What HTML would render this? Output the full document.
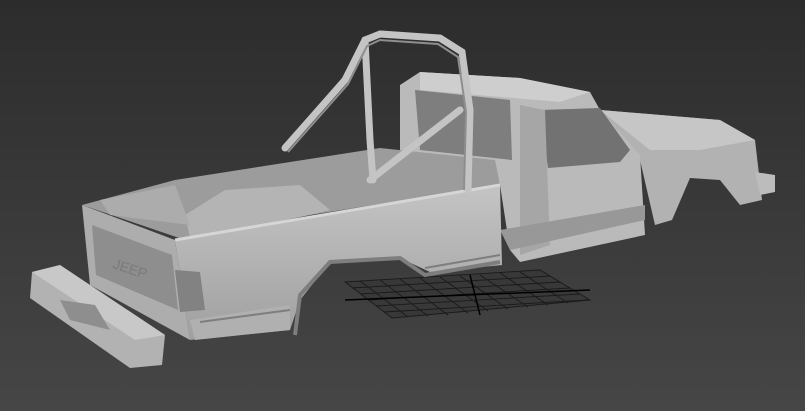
<!DOCTYPE html>
<html><head><style>
html,body{margin:0;padding:0;width:805px;height:411px;overflow:hidden;background:#3a3a3a}
</style></head><body>
<svg width="805" height="411" viewBox="0 0 805 411" xmlns="http://www.w3.org/2000/svg">
<defs>
<linearGradient id="bg" x1="0" y1="0" x2="0" y2="1"><stop offset="0" stop-color="#2c2c2c"/><stop offset="1" stop-color="#464646"/></linearGradient>
<linearGradient id="side" x1="0" y1="0" x2="0" y2="1"><stop offset="0" stop-color="#c4c4c4"/><stop offset="1" stop-color="#a0a0a0"/></linearGradient>
</defs>
<rect width="805" height="411" fill="url(#bg)"/>
<g stroke="#1a1a1a" stroke-width="0.9" fill="none">
<polygon points="345,282 540,270 590,300 392,318" fill="#383838"/>
<path d="M360,281 L408,317 M380,280 L428,316 M400,279 L448,315 M420,278 L468,313 M440,277 L488,311 M460,276 L508,309 M480,275 L528,307 M500,273 L548,305 M520,272 L568,303 M352,288 L550,276 M360,294 L560,282 M368,300 L570,288 M376,306 L580,294 M384,312 L588,300"/>
<path d="M345,300 L590,290 M470,275 L480,315" stroke="#000" stroke-width="1.5"/>
</g>
<polygon points="600,110 720,120 755,140 762,200 740,205 720,180 690,178 672,220 655,225 640,160" fill="#b2b2b2"/>
<polygon points="600,110 720,120 755,140 700,150 650,150" fill="#c6c6c6"/>
<polygon points="755,172 775,175 775,192 760,195" fill="#bcbcbc"/>
<polygon points="400,85 420,72 520,78 590,92 600,110 640,155 645,235 520,262 510,250 500,185 400,160" fill="#bababa"/>
<polygon points="420,72 520,78 590,92 560,102 420,90" fill="#cecece"/>
<polygon points="415,90 510,100 512,160 420,150" fill="#7e7e7e"/>
<polygon points="540,110 600,108 630,150 620,162 548,168" fill="#727272"/>
<polygon points="520,105 545,110 550,245 520,255" fill="#a6a6a6"/>
<polygon points="500,230 645,205 645,220 510,250" fill="#989898"/>
<polygon points="82,205 175,180 380,148 495,160 500,185 310,215 185,240" fill="#9c9c9c"/>
<polygon points="185,215 225,190 300,185 330,210 310,215 190,238" fill="#b4b4b4"/>
<polygon points="100,200 175,185 190,225 110,215" fill="#acacac"/>
<polygon points="175,240 500,185 502,265 430,272 400,258 330,262 300,300 290,330 190,340" fill="url(#side)"/>
<path d="M175,240 L500,185" stroke="#d6d6d6" stroke-width="3"/>
<path d="M295,335 L300,295 L330,262 L400,258 L425,275 L500,262" stroke="#7e7e7e" stroke-width="4" fill="none"/>
<polygon points="190,320 290,305 290,330 195,340" fill="#b0b0b0"/>
<path d="M200,322 L290,310 M425,268 L500,255" stroke="#7e7e7e" stroke-width="2"/>
<polygon points="82,205 175,240 190,340 90,285" fill="#adadad"/>
<polygon points="92,225 172,255 178,310 96,275" fill="#8e8e8e"/>
<text x="112" y="268" font-family="Liberation Sans,sans-serif" font-size="14" fill="#7a7a7a" transform="rotate(18 112 268)">JEEP</text>
<polygon points="175,270 200,272 205,310 180,312" fill="#828282"/>
<polygon points="32,272 60,265 165,335 162,365 130,368 30,298" fill="#b2b2b2"/>
<polygon points="32,272 60,265 165,335 135,340" fill="#c8c8c8"/>
<polygon points="60,300 95,305 110,330 70,320" fill="#8e8e8e"/>
<g stroke="#c4c4c4" stroke-width="7" fill="none" stroke-linecap="round">
<path d="M285,148 L345,80 L365,40 L380,34 L440,38 L462,52 L470,110 L468,190"/>
<path d="M365,40 L370,140 L373,180"/>
<path d="M370,180 L460,110"/>
</g>
<g stroke="#8e8e8e" stroke-width="2" fill="none">
<path d="M288,152 L348,84 L367,46 L380,40 L438,44 L458,57 L466,112 L464,190"/>
</g>
</svg>
</body></html>
